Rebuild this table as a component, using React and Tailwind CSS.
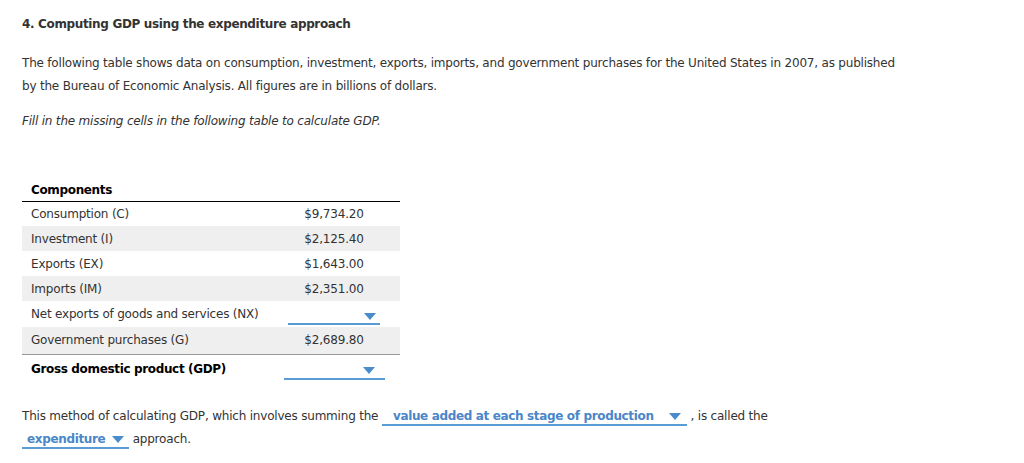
import React from 'react';

const rows = [
  { label: 'Consumption (C)', value: '$9,734.20', h: 'h-[25px]' },
  { label: 'Investment (I)', value: '$2,125.40', shaded: true, h: 'h-[25px]' },
  { label: 'Exports (EX)', value: '$1,643.00', h: 'h-[25px]' },
  { label: 'Imports (IM)', value: '$2,351.00', shaded: true, h: 'h-[25px]' },
  { label: 'Net exports of goods and services (NX)', dropdown: true, h: 'h-[26px]' },
  { label: 'Government purchases (G)', value: '$2,689.80', shaded: true, h: 'h-[27px]' },
];

function Arrow() {
  return (
    <svg width="12" height="7" viewBox="0 0 12 7" className="shrink-0">
      <polygon points="0,0 12,0 6,7" fill="#4a8ccb" />
    </svg>
  );
}

function Dropdown({ label = '', className = '' }) {
  return (
    <span
      className={`inline-flex items-center justify-between border-b-2 border-[#5b9bd5] font-bold tracking-[-0.35px] text-[#4a86c8] ${className}`}
    >
      <span>{label}</span>
      <Arrow />
    </span>
  );
}

export default function App() {
  return (
    <div className="min-h-screen bg-white text-[12px] tracking-[-0.2px] text-[#333] font-['Verdana','DejaVu_Sans',sans-serif] px-[22px] pt-[15px]">
      <h1 className="font-bold text-[12px] tracking-[-0.35px] leading-[18px] text-[#333]">
        4. Computing GDP using the expenditure approach
      </h1>

      <p className="mt-[19px] leading-[23px]">
        The following table shows data on consumption, investment, exports, imports, and government purchases for the United States in 2007, as published
        <br />
        by the Bureau of Economic Analysis. All figures are in billions of dollars.
      </p>
      <p className="mt-[14px] italic leading-[18px]">
        Fill in the missing cells in the following table to calculate GDP.
      </p>

      <table className="mt-[50px] w-[378px] border-collapse">
        <thead>
          <tr className="border-b border-black">
            <th className="pl-[9px] h-[21px] text-left font-bold tracking-[-0.35px] text-black">Components</th>
            <th />
          </tr>
        </thead>
        <tbody>
          {rows.map((row) => (
            <tr key={row.label} className={row.shaded ? 'bg-[#efefef]' : ''}>
              <td className={`pl-[9px] ${row.h} align-middle`}>{row.label}</td>
              <td className="w-[132px] text-center align-middle">
                {row.dropdown ? (
                  <Dropdown className="w-[92px] h-[16px] pr-[4px] mt-[4px]" />
                ) : (
                  row.value
                )}
              </td>
            </tr>
          ))}
          <tr className="border-t border-[#999]">
            <td className="pl-[9px] h-[27px] pt-[2px] font-bold tracking-[-0.35px] text-black">Gross domestic product (GDP)</td>
            <td className="text-center pt-[2px]">
              <Dropdown className="w-[101px] h-[16px] pr-[10px] mt-[4px]" />
            </td>
          </tr>
        </tbody>
      </table>

      <p className="mt-[24px] leading-[23px]">
        This method of calculating GDP, which involves summing the{' '}
        <Dropdown
          label="value added at each stage of production"
          className="w-[305px] h-[17px] pl-[11px] pr-[6px] align-baseline"
        />{' '}
        , is called the
        <br />
        <Dropdown label="expenditure" className="w-[107px] h-[17px] pl-[5px] pr-[5px] align-baseline" />{' '}
        approach.
      </p>
    </div>
  );
}
